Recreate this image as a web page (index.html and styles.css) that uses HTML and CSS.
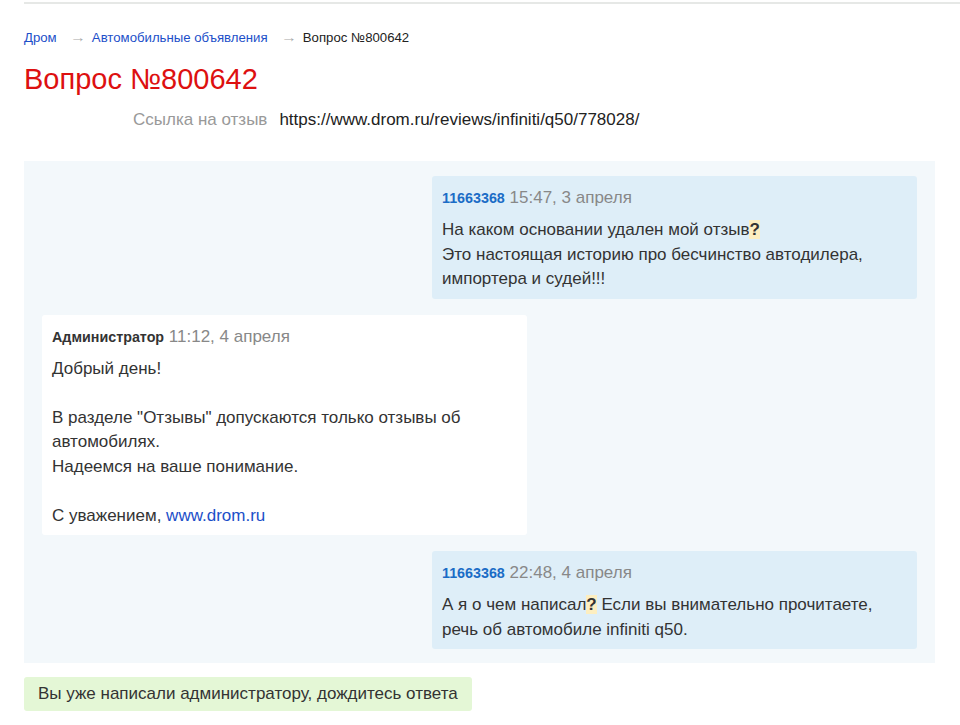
FILE: index.html
```html
<!DOCTYPE html>
<html lang="ru">
<head>
<meta charset="utf-8">
<title>Вопрос №800642</title>
<link rel="stylesheet" href="styles.css">
</head>
<body>
<div class="topline"></div>
<div class="page">
  <nav class="crumbs">
    <a href="#">Дром</a><span class="arr">→</span><a href="#">Автомобильные объявления</a><span class="arr">→</span><span class="cur">Вопрос №800642</span>
  </nav>
  <h1 class="title">Вопрос №800642</h1>
  <div class="linkrow">
    <span class="label">Ссылка на отзыв</span>
    <span class="url">https://www.drom.ru/reviews/infiniti/q50/778028/</span>
  </div>
  <div class="chat">
    <div class="msg msg-user">
      <div class="head"><span class="uid">11663368</span> <span class="time">15:47, 3 апреля</span></div>
      <div class="body">На каком основании удален мой отзыв<b class="q">?</b><br>Это настоящая историю про бесчинство автодилера, импортера и судей!!!</div>
    </div>
    <div class="msg msg-admin">
      <div class="head"><span class="admin">Администратор</span> <span class="time">11:12, 4 апреля</span></div>
      <div class="body">Добрый день!<br><br>В разделе "Отзывы" допускаются только отзывы об автомобилях.<br>Надеемся на ваше понимание.<br><br>С уважением, <a href="#">www.drom.ru</a></div>
    </div>
    <div class="msg msg-user">
      <div class="head"><span class="uid">11663368</span> <span class="time">22:48, 4 апреля</span></div>
      <div class="body">А я о чем написал<b class="q">?</b> Если вы внимательно прочитаете, речь об автомобиле infiniti q50.</div>
    </div>
  </div>
  <div class="notice">Вы уже написали администратору, дождитесь ответа</div>
</div>
</body>
</html>
```

FILE: styles.css
```css
html, body {
  margin: 0;
  padding: 0;
  background: #fff;
}
body {
  font-family: "Liberation Sans", Arial, sans-serif;
  color: #333;
}
a {
  color: #1c4fc9;
  text-decoration: none;
}
.topline {
  margin: 2px 0 0 24px;
  height: 2px;
  background: #e6e8e6;
}
.page {
  padding: 0 24px;
}
.crumbs {
  margin-top: 24px;
  font-size: 13.2px;
  line-height: 20px;
  color: #222;
}
.crumbs .arr {
  display: inline-block;
  color: #aaa;
  margin: 0 8px 0 14px;
  transform: scaleX(1.2);
}
.crumbs .cur {
  color: #222;
}
.title {
  margin: 14px 0 0;
  font-size: 29px;
  line-height: 34px;
  font-weight: normal;
  color: #dd1010;
}
.linkrow {
  margin-top: 14px;
  padding-left: 109px;
  font-size: 17px;
  line-height: 20px;
  display: flex;
  gap: 12px;
}
.linkrow .label {
  color: #999;
}
.linkrow .url {
  color: #222;
}
.chat {
  margin-top: 31px;
  width: 911px;
  box-sizing: border-box;
  background: #f3f8fb;
  padding: 15px 18px 14px;
  display: flex;
  flex-direction: column;
  gap: 16px;
}
.msg {
  width: 485px;
  box-sizing: border-box;
  padding: 10px 24px 7px 10px;
  border-radius: 3px;
}
.msg-user {
  align-self: flex-end;
  background: #deeef8;
}
.msg-admin {
  align-self: flex-start;
  background: #fff;
}
.head {
  font-size: 17px;
  line-height: 24px;
  color: #888;
}
.uid {
  font-size: 14.3px;
  font-weight: bold;
  color: #1b6cc6;
}
.admin {
  font-size: 14.3px;
  font-weight: bold;
  color: #333;
}
.body {
  margin-top: 8px;
  font-size: 17px;
  line-height: 24.5px;
  color: #333;
}
.q {
  background: #fdeec0;
  color: #333;
}
.notice {
  margin-top: 14px;
  display: inline-block;
  background: #e4f7d6;
  border-radius: 3px;
  padding: 0 14px;
  font-size: 17px;
  line-height: 34px;
  color: #333;
}
```
